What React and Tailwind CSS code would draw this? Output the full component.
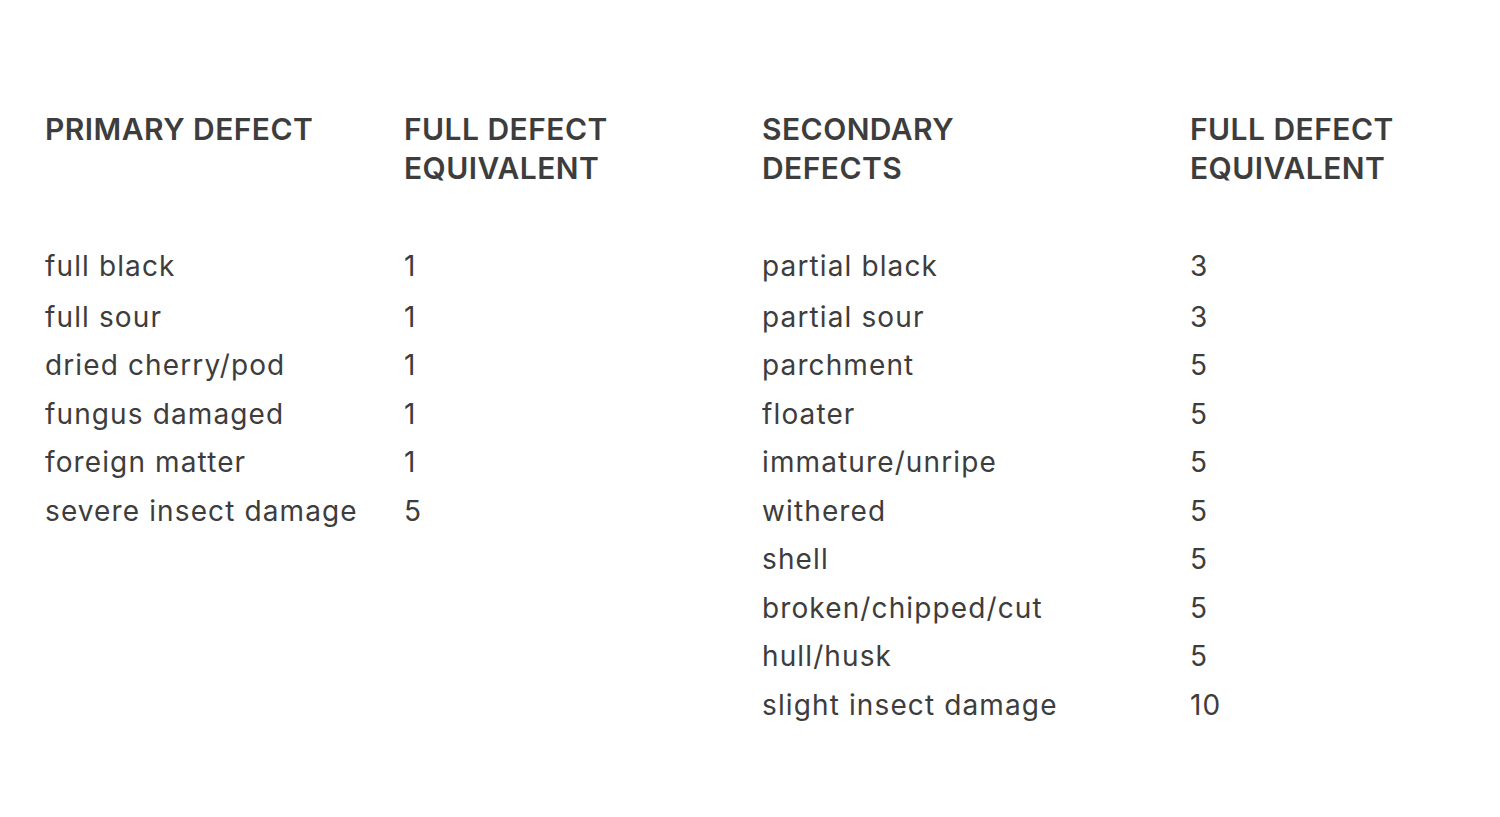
import React from "react";

const primary = [
  ["full black", "1"],
  ["full sour", "1"],
  ["dried cherry/pod", "1"],
  ["fungus damaged", "1"],
  ["foreign matter", "1"],
  ["severe insect damage", "5"],
];

const secondary = [
  ["partial black", "3"],
  ["partial sour", "3"],
  ["parchment", "5"],
  ["floater", "5"],
  ["immature/unripe", "5"],
  ["withered", "5"],
  ["shell", "5"],
  ["broken/chipped/cut", "5"],
  ["hull/husk", "5"],
  ["slight insect damage", "10"],
];

function Table({ head1, head2, rows, w1, w2 }) {
  return (
    <div className="flex flex-col">
      <div className="flex font-semibold text-[30px] leading-[39px] tracking-[0.015em] uppercase">
        <div className={w1}>{head1}</div>
        <div className={w2}>{head2}</div>
      </div>
      <div className="mt-[54px] flex flex-col text-[28px] leading-[48.5px] tracking-[0.04em]">
        {rows.map(([a, b], i) => (
          <div key={a} className={"flex " + (i === 0 ? "mb-[2px]" : "")}>
            <div className={w1}>{a}</div>
            <div className={w2}>{b}</div>
          </div>
        ))}
      </div>
    </div>
  );
}

export default function App() {
  return (
    <div
      className="w-[1500px] h-[817px] bg-white text-[#3d3d3d] pt-[110px] pl-[45px] flex"
      style={{ fontFamily: "Inter, 'Noto Sans', sans-serif" }}
    >
      <Table
        head1={<>PRIMARY DEFECT</>}
        head2={<>FULL DEFECT<br />EQUIVALENT</>}
        rows={primary}
        w1="w-[359px]"
        w2="w-[358px]"
      />
      <Table
        head1={<>SECONDARY<br />DEFECTS</>}
        head2={<>FULL DEFECT<br />EQUIVALENT</>}
        rows={secondary}
        w1="w-[428px]"
        w2="w-[250px]"
      />
    </div>
  );
}
